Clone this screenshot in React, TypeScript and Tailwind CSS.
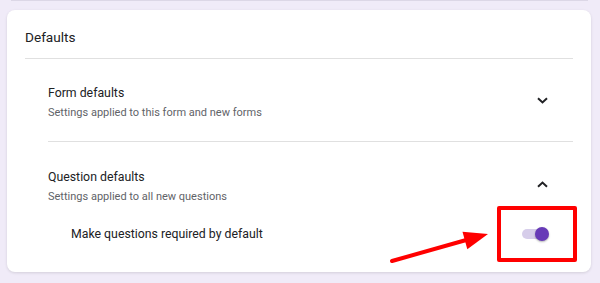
import React from 'react'

function Chevron({ up }: { up?: boolean }) {
  return (
    <svg width="11" height="7" viewBox="0 0 11 7" className={up ? 'rotate-180' : ''}>
      <path d="M1 1.2 L5.5 5.4 L10 1.2" fill="none" stroke="#202124" strokeWidth="2" />
    </svg>
  )
}

function Toggle() {
  return (
    <div className="relative w-[27px] h-[14px]">
      <div className="absolute left-0 top-[2px] w-[26px] h-[10px] rounded-full bg-[#d6cdea]" />
      <div className="absolute right-0 top-0 w-[14px] h-[14px] rounded-full bg-[#673ab7] shadow-[0_1px_2px_rgba(0,0,0,0.3)]" />
    </div>
  )
}

function SectionHead({ title, sub, up }: { title: string; sub: string; up?: boolean }) {
  return (
    <div className="flex items-center justify-between pr-[25px]">
      <div className="flex flex-col pt-[4px]">
        <span className="text-[12.3px] leading-[20px] text-[#202124]">{title}</span>
        <span className="text-[11px] leading-[19px] text-[#5f6368]">{sub}</span>
      </div>
      <Chevron up={up} />
    </div>
  )
}

export default function App() {
  return (
    <div className="relative w-[600px] h-[283px] overflow-hidden bg-[#f0ebf8]" style={{ fontFamily: 'Roboto, "Noto Sans", sans-serif' }}>
      <div className="mx-[11px] w-[577px] h-px bg-[#dcd7e6]" />
      <div className="mt-[9px] ml-[7px] w-[584px] h-[262px] bg-white rounded-lg shadow-[0_1px_3px_rgba(0,0,0,0.12)] px-[18px]">
        <div className="h-[49px] pt-[6px] flex items-center border-b border-[#e0e0e0]">
          <span className="text-[13.6px] text-[#202124]">Defaults</span>
        </div>
        <div className="ml-[23px] h-[83px] flex flex-col justify-center border-b border-[#e0e0e0]">
          <SectionHead title="Form defaults" sub="Settings applied to this form and new forms" />
        </div>
        <div className="ml-[23px] pt-[21px]">
          <SectionHead title="Question defaults" sub="Settings applied to all new questions" up />
          <div className="mt-[8px] h-[40px] flex items-center justify-between pl-[23px] pr-[24px]">
            <span className="text-[12.3px] text-[#202124]">Make questions required by default</span>
            <Toggle />
          </div>
        </div>
      </div>

      {/* annotation overlay */}
      <div className="absolute left-[497px] top-[206px] w-[80px] h-[56px] border-4 border-[#ff0000] rounded-[2px]" />
      <svg className="absolute left-0 top-0" width="600" height="283" viewBox="0 0 600 283">
        <line x1="392" y1="261" x2="468" y2="239.5" stroke="#ff0000" strokeWidth="4" strokeLinecap="round" />
        <polygon points="488,234 462.5,231.8 467.3,249.2" fill="#ff0000" />
      </svg>
    </div>
  )
}
